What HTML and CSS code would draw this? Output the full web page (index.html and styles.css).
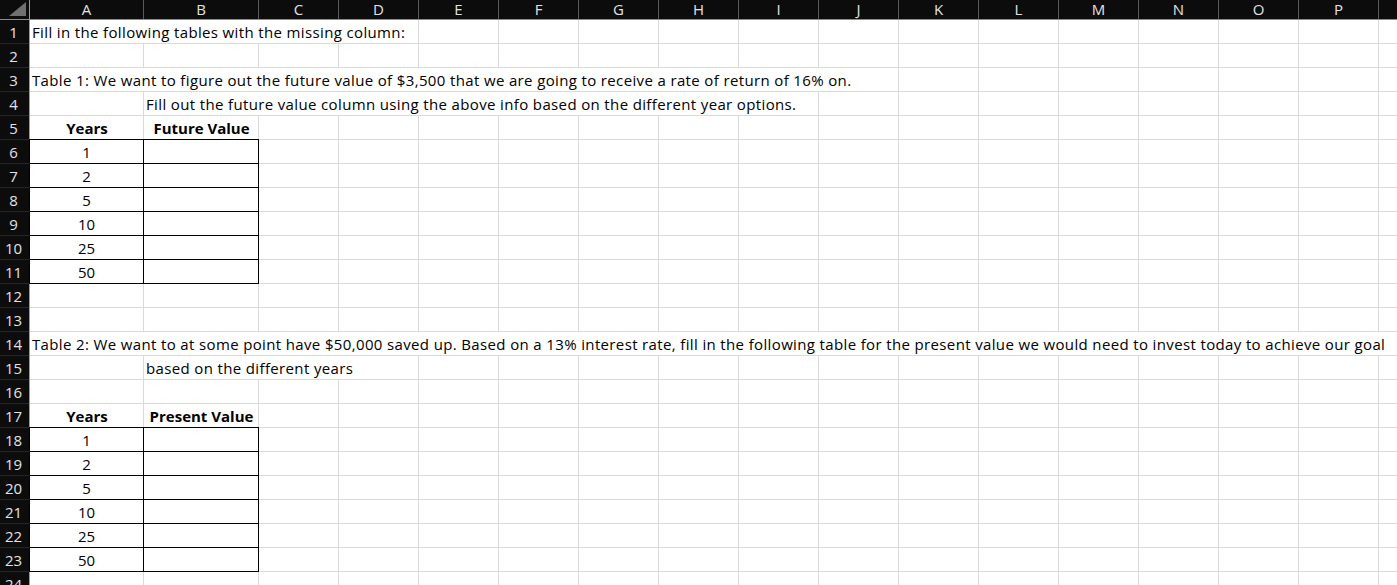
FILE: index.html
```html
<!DOCTYPE html>
<html lang="en">
<head>
    <meta charset="UTF-8">
    <meta name="viewport" content="width=device-width, initial-scale=1.0">
    <title>TVM Worksheet</title>
    <link rel="stylesheet" href="styles.css">
</head>
<body>
    <div class="sheet">
        <div class="corner">
            <svg width="30" height="20" viewBox="0 0 30 20"><polygon points="9,16 26,16 26,2" fill="#707070"/></svg>
        </div>

        <div class="col-heads">
            <div>A</div><div>B</div><div>C</div><div>D</div><div>E</div><div>F</div>
            <div>G</div><div>H</div><div>I</div><div>J</div><div>K</div><div>L</div>
            <div>M</div><div>N</div><div>O</div><div>P</div><div></div>
        </div>

        <div class="row-heads">
            <div>1</div><div>2</div><div>3</div><div>4</div><div>5</div><div>6</div>
            <div>7</div><div>8</div><div>9</div><div>10</div><div>11</div><div>12</div>
            <div>13</div><div>14</div><div>15</div><div>16</div><div>17</div><div>18</div>
            <div>19</div><div>20</div><div>21</div><div>22</div><div>23</div><div>24</div>
        </div>

        <div class="cells">
            <div class="txt r1">Fill in the following tables with the missing column:</div>
            <div class="txt r3">Table 1: We want to figure out the future value of $3,500 that we are going to receive a rate of return of 16% on.</div>
            <div class="txt r4">Fill out the future value column using the above info based on the different year options.</div>
            <div class="head r5a">Years</div>
            <div class="head r5b">Future Value</div>

            <div class="box t1">
                <div class="num">1</div><div class="val"></div>
                <div class="num">2</div><div class="val"></div>
                <div class="num">5</div><div class="val"></div>
                <div class="num">10</div><div class="val"></div>
                <div class="num">25</div><div class="val"></div>
                <div class="num">50</div><div class="val"></div>
            </div>

            <div class="txt r14">Table 2: We want to at some point have $50,000 saved up. Based on a 13% interest rate, fill in the following table for the present value we would need to invest today to achieve our goal</div>
            <div class="txt r15">based on the different years</div>
            <div class="head r17a">Years</div>
            <div class="head r17b">Present Value</div>

            <div class="box t2">
                <div class="num">1</div><div class="val"></div>
                <div class="num">2</div><div class="val"></div>
                <div class="num">5</div><div class="val"></div>
                <div class="num">10</div><div class="val"></div>
                <div class="num">25</div><div class="val"></div>
                <div class="num">50</div><div class="val"></div>
            </div>
        </div>
    </div>
</body>
</html>
```

FILE: styles.css
```css
body {
    margin: 0;
    background-color: #fff;
    font-family: "Open Sans", "Noto Sans", sans-serif;
    font-size: 15px;
    font-variant-ligatures: none;
    color: #000;
    overflow: hidden;
}
.sheet {
    display: grid;
    grid-template-columns: 30px auto;
    grid-template-rows: 20px auto;
    width: 1440px;
}
.corner {
    background-color: #0c0c0c;
    border-right: 1px solid #9a9a9a;
    border-bottom: 1px solid #8c8c8c;
    box-sizing: border-box;
}
.corner svg {
    display: block;
}
.col-heads {
    display: grid;
    grid-template-columns: 114px 115px repeat(15, 80px);
    background-color: #0c0c0c;
    border-bottom: 1px solid #8c8c8c;
    box-sizing: border-box;
}
.col-heads div {
    border-right: 1px solid #5a5a5a;
    color: #e2e2e2;
    text-align: center;
    line-height: 19px;
}
.row-heads {
    background-color: #0c0c0c;
    border-right: 1px solid #9a9a9a;
}
.row-heads div {
    height: 24px;
    box-sizing: border-box;
    border-bottom: 1px solid #262626;
    color: #e2e2e2;
    text-align: center;
    padding: 3px 2px 0 0;
    line-height: 19px;
}
.cells {
    display: grid;
    grid-template-columns: 114px 115px repeat(15, 80px);
    grid-template-rows: repeat(24, 24px);
    background-image:
        linear-gradient(#dadada, #dadada),
        linear-gradient(#dadada, #dadada),
        repeating-linear-gradient(to right, transparent 0 79px, #dadada 79px 80px),
        repeating-linear-gradient(to bottom, transparent 0 23px, #dadada 23px 24px);
    background-size: 1px 100%, 1px 100%, calc(100% - 229px) 100%, 100% 100%;
    background-position: 113px 0, 228px 0, 229px 0, 0 0;
    background-repeat: no-repeat;
}
.txt, .head {
    height: 23px;
    box-sizing: border-box;
    padding: 3px 0 0 2px;
    line-height: 19px;
    white-space: nowrap;
}
.txt {
    background-color: #fff;
    margin-right: 1px;
    letter-spacing: 0.36px;
}
.head {
    font-weight: bold;
    text-align: center;
    padding-left: 0;
}
.r1 { grid-row: 1; grid-column: 1 / span 4; }
.r3 { grid-row: 3; grid-column: 1 / span 10; }
.r4 { grid-row: 4; grid-column: 2 / span 8; }
.r5a { grid-row: 5; grid-column: 1; }
.r5b { grid-row: 5; grid-column: 2; }
.r14 { grid-row: 14; grid-column: 1 / -1; }
.r15 { grid-row: 15; grid-column: 2 / span 3; }
.r17a { grid-row: 17; grid-column: 1; }
.r17b { grid-row: 17; grid-column: 2; }
.t1 { grid-row: 6 / span 6; }
.t2 { grid-row: 18 / span 6; }
.box {
    grid-column: 1 / span 2;
    display: grid;
    grid-template-columns: 114px 115px;
    grid-auto-rows: 24px;
    margin: -1px 0 0 -1px;
    border-top: 1px solid #000;
    border-left: 1px solid #000;
    background-color: #fff;
}
.box div {
    box-sizing: border-box;
    border-right: 1px solid #000;
    border-bottom: 1px solid #000;
}
.num {
    text-align: center;
    padding-top: 3px;
    line-height: 19px;
}
```
